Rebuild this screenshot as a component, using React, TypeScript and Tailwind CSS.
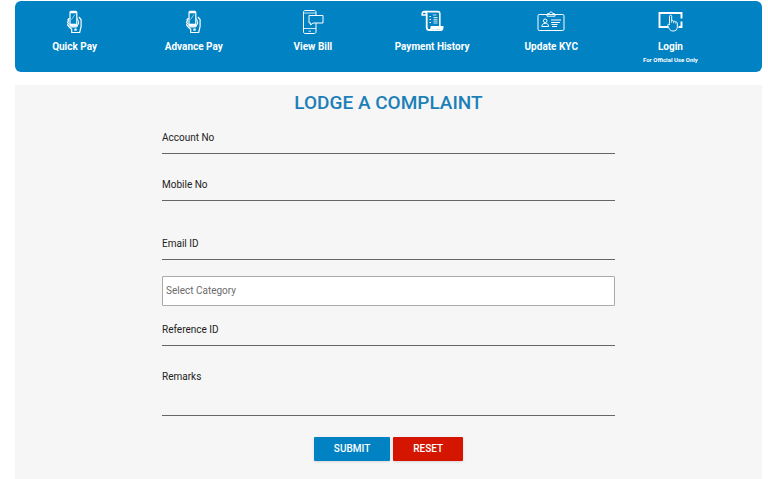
import type { ReactNode } from "react";

function PhoneInHandIcon() {
  return (
    <svg viewBox="0 0 28 24" className="h-6 w-7" fill="none" stroke="currentColor" aria-hidden="true">
      <rect x="9" y="1.4" width="6.8" height="14.8" rx="1" strokeWidth="1.2" />
      <path d="M9 2.6h6.8" strokeWidth="1.4" />
      <path d="M8.600 14.800h7.600" strokeWidth="2.2" />
      <path d="M10.500 9.500l3.500-5" strokeWidth="0.6" />
      <path d="M8.600 8.200L7 9.500l.5 1.300-1 1.300.9 1.300-.8 1.500 1.600 2.100 2.500 2.200v3.300h8l1.400-6V9.500l-2.300-2.500" strokeWidth="1.2" />
      <path d="M16.500 8.500l1.300 4.500-2 4H9.500" strokeWidth="1" />
      <path d="M13.600 18.800h1.800v1.600h-1.800z" fill="currentColor" strokeWidth="0.5" />
    </svg>
  );
}

function BillIcon() {
  return (
    <svg viewBox="1.5 0 28 24" className="h-6 w-7" fill="none" stroke="currentColor" aria-hidden="true">
      <path d="M18.5 5.5V2.2c0-1-.6-1.7-1.6-1.7H7.6C6.6.5 6 1.2 6 2.2v19.6c0 1 .6 1.7 1.6 1.7h9.3c1 0 1.6-.7 1.6-1.7V13" strokeWidth="1" />
      <path d="M6 3h12.5M6 18.5h12.5M11 21.2h2.5" strokeWidth="0.8" />
      <path d="M11.5 5.5h14V13h-10l-2.3 2v-2h-1.700z" strokeWidth="1" />
    </svg>
  );
}

function ScrollIcon() {
  return (
    <svg viewBox="0 0 28 24" className="h-6 w-7" fill="none" stroke="currentColor" aria-hidden="true">
      <path d="M8.5 5H4.200c-.3-2 .6-3.400 2.300-3.400h13.300c1.400 0 2 .9 2 2.200v12.700" strokeWidth="1.6" />
      <path d="M6.500 1.800c1.600 0 2.200 1 2.200 2.500v13c0 1.800.9 2.900 2.500 2.900h11c1.700 0 2.600-1.200 2.400-3.200H13.500c0 2-.7 3.200-2.300 3.200" strokeWidth="1.800" />
      <path d="M14 18.600h10" strokeWidth="1.6" />
      <path d="M11.5 6.500H13M11.500 9.500H13M11.500 12.500H13" strokeWidth="1" />
      <path d="M14.800 5h3.700M15.500 7.500h4M15.500 9.300h4M15.500 11.100h4M15.500 13h4" strokeWidth="0.8" />
    </svg>
  );
}

function IdCardIcon() {
  return (
    <svg viewBox="0 0 28 24" className="h-6 w-7" fill="none" stroke="currentColor" aria-hidden="true">
      <rect x="1" y="4.5" width="26" height="16" rx="1.2" strokeWidth="1" />
      <path d="M10 6.200V4.500c0-.6.4-.9 1-.9h1.300c.2-1.100.8-1.600 1.700-1.600s1.500.5 1.700 1.600H17c.6 0 1 .3 1 .9v1.700z" strokeWidth="1" />
      <circle cx="8.2" cy="10.800" r="1.8" strokeWidth="1" />
      <path d="M4.800 16.500c0-2 1.300-3.200 3.400-3.200s3.400 1.200 3.400 3.200z" strokeWidth="1" />
      <path d="M14 10h10M14 12.500h9M14.500 14.500h6M15 16.500h5" strokeWidth="1.1" />
    </svg>
  );
}

function TouchScreenIcon() {
  return (
    <svg viewBox="0 0 28 24" className="h-6 w-7" fill="none" stroke="currentColor" aria-hidden="true">
      <path d="M12.500 17H3.500V3h22v5.500M25.500 11.500V17h-3" strokeWidth="1.9" />
      <path d="M13.500 13.500V6.300c0-1.500 2.200-1.500 2.200 0V11c.5-.7 1.800-.5 2 .5.600-.6 1.700-.3 1.900.6.700-.5 1.700 0 1.700 1v3.500c0 3-1.500 4.400-4.300 4.400-2.600 0-3.500-1.300-5.200-5.300-.5-1.500.9-2 1.700-.8z" fill="#0082c3" strokeWidth="1" />
      <path d="M15.700 11v2M17.700 11.500v1.800M19.600 12.200v1.400" strokeWidth="0.7" />
    </svg>
  );
}

type NavItem = {
  label: string;
  icon: ReactNode;
  note?: string;
};

const navItems: NavItem[] = [
  { label: "Quick Pay", icon: <PhoneInHandIcon /> },
  { label: "Advance Pay", icon: <PhoneInHandIcon /> },
  { label: "View Bill", icon: <BillIcon /> },
  { label: "Payment History", icon: <ScrollIcon /> },
  { label: "Update KYC", icon: <IdCardIcon /> },
  { label: "Login", icon: <TouchScreenIcon />, note: "For Official Use Only" },
];

type FieldProps = {
  id: string;
  label: string;
  type?: string;
  multiline?: boolean;
};

// label and control share one grid cell, so the label sits inside the field
function Field({ id, label, type = "text", multiline }: FieldProps) {
  return (
    <div className="grid">
      <label htmlFor={id} className="col-start-1 row-start-1 text-[10px] leading-[18px] text-[#222]">
        {label}
      </label>
      {multiline ? (
        <textarea
          id={id}
          className="col-start-1 row-start-1 h-12 resize-none border-b border-[#666] bg-transparent text-[10px] outline-none"
        />
      ) : (
        <input
          id={id}
          type={type}
          className="col-start-1 row-start-1 h-[25px] border-b border-[#666] bg-transparent text-[10px] outline-none"
        />
      )}
    </div>
  );
}

export default function App() {
  return (
    <div className="flex min-h-screen flex-col gap-[13px] bg-white pt-px pr-1.5 pl-[15px] font-['Roboto',sans-serif]">
      <nav className="rounded-md bg-[#0082c3] pt-[9px] pr-8 pb-[7px] text-white">
        <ul className="grid grid-cols-6">
          {navItems.map((item) => (
            <li key={item.label}>
              <a href="#" className="flex flex-col items-center text-[10px] leading-4 font-bold">
                {item.icon}
                <span className="mt-[5px]">{item.label}</span>
                {item.note && <span className="text-[6px] leading-[10px]">{item.note}</span>}
              </a>
            </li>
          ))}
        </ul>
      </nav>

      <main className="flex-1 bg-[#f6f6f6] pt-[5px]">
        <h1 className="text-center text-[19px] leading-[26px] font-medium text-[#1c7fb8]">LODGE A COMPLAINT</h1>
        <form className="mx-auto mt-[13px] w-full max-w-[453px]" onSubmit={(e) => e.preventDefault()}>
          <div className="flex flex-col gap-[22px]">
            <Field id="account" label="Account No" />
            <Field id="mobile" label="Mobile No" type="tel" />
          </div>
          <div className="mt-[34px] flex flex-col gap-4">
            <Field id="email" label="Email ID" type="email" />
            <select
              aria-label="Select Category"
              defaultValue=""
              className="h-[30px] w-full appearance-none rounded-[1px] border border-[#aaa] bg-white px-[3px] pb-0.5 text-[10px] text-[#6c6c6c]"
            >
              <option value="">Select Category</option>
            </select>
          </div>
          <div className="mt-[15px] flex flex-col gap-[22px]">
            <Field id="reference" label="Reference ID" />
            <Field id="remarks" label="Remarks" multiline />
          </div>
          <div className="mt-[21px] flex justify-center gap-[3px]">
            <button type="submit" className="h-6 rounded-[1px] bg-[#0082c3] px-5 pb-0.5 text-[10px] font-medium text-white shadow-sm">
              SUBMIT
            </button>
            <button type="reset" className="h-6 rounded-[1px] bg-[#d41600] px-5 pb-0.5 text-[10px] font-medium text-white shadow-sm">
              RESET
            </button>
          </div>
        </form>
      </main>
    </div>
  );
}
